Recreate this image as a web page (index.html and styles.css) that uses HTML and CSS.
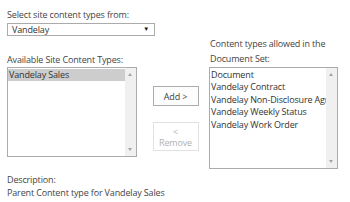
FILE: index.html
```html
<!DOCTYPE html>
<html lang="en">
<head>
    <meta charset="UTF-8">
    <title>Document Set content types</title>
    <link rel="stylesheet" href="styles.css">
</head>
<body>
    <div class="panel">
        <div class="source">
            <div class="label">Select site content types from:</div>
            <div class="dropdown">
                <span>Vandelay</span>
                <span class="caret">&#9660;</span>
            </div>
        </div>

        <div class="picker">
            <div class="label col-left">Available Site Content Types:</div>
            <div class="label col-right">Content types allowed in the Document Set:</div>

            <div class="col-left">
                <div class="listbox short">
                    <div class="items">
                        <div class="item selected">Vandelay Sales</div>
                    </div>
                    <div class="scroll"><span class="up"></span><span class="down"></span></div>
                </div>
                <div class="description">
                    <div>Description:</div>
                    <div>Parent Content type for Vandelay Sales</div>
                </div>
            </div>

            <div class="buttons">
                <button class="btn">Add &gt;</button>
                <button class="btn tall" disabled><span>&lt;</span><span>Remove</span></button>
            </div>

            <div class="col-right">
                <div class="listbox tall-list">
                    <div class="items">
                        <div class="item">Document</div>
                        <div class="item">Vandelay Contract</div>
                        <div class="item">Vandelay Non-Disclosure Agreement</div>
                        <div class="item">Vandelay Weekly Status</div>
                        <div class="item">Vandelay Work Order</div>
                    </div>
                    <div class="scroll"><span class="up"></span><span class="down"></span></div>
                </div>
            </div>
        </div>
    </div>
</body>
</html>
```

FILE: styles.css
```css
body {
    margin: 0;
    background: #fff;
    font-family: "Open Sans", Arial, sans-serif;
    font-size: 9px;
    letter-spacing: -0.15px;
    color: #444;
}

.panel {
    padding: 9px 0 0 7px;
}

.label {
    line-height: 12px;
}

.dropdown {
    width: 142px;
    height: 11px;
    margin-top: 2px;
    border: 1px solid #ababab;
    display: flex;
    justify-content: space-between;
    align-items: center;
    padding: 0 0 0 4px;
    box-sizing: content-box;
    line-height: 11px;
    color: #333;
}

.caret {
    font-size: 6px;
    color: #111;
    margin-right: 5px;
}

.picker {
    display: grid;
    grid-template-columns: 130px 72px 129px;
    grid-template-rows: auto auto;
    margin-top: 0;
}

.picker .label {
    align-self: end;
    margin-bottom: 1px;
}

.col-left {
    grid-column: 1;
}

.col-right {
    grid-column: 3;
}

.picker .label.col-right {
    line-height: 15px;
    padding-left: 1px;
}

.listbox {
    border: 1px solid #ababab;
    display: flex;
    box-sizing: border-box;
}

.listbox.short {
    height: 90px;
}

.listbox.tall-list {
    height: 102px;
}

.items {
    flex: 1;
    overflow: hidden;
    white-space: nowrap;
    padding-top: 1px;
}

.item {
    line-height: 12.4px;
    height: 12.4px;
    padding-left: 1px;
    color: #333;
}

.item.selected {
    background: #cdcdcd;
}

.scroll {
    width: 11px;
    background: #f0f0f0;
    position: relative;
}

.up, .down {
    position: absolute;
    left: 3px;
    width: 0;
    height: 0;
    border-left: 2.5px solid transparent;
    border-right: 2.5px solid transparent;
}

.up {
    top: 5px;
    border-bottom: 3px solid #a3a3a3;
}

.down {
    bottom: 5px;
    border-top: 3px solid #a3a3a3;
}

.description {
    margin-top: 16px;
    line-height: 13px;
    white-space: nowrap;
}

.buttons {
    grid-column: 2;
    grid-row: 2;
    display: flex;
    flex-direction: column;
    align-items: center;
    padding: 19px 0 0 5px;
    gap: 16px;
}

.btn {
    width: 46px;
    height: 20px;
    border: 1px solid #ababab;
    background: #fdfdfd;
    font-family: inherit;
    font-size: 9px;
    letter-spacing: inherit;
    color: #444;
    padding: 0;
    line-height: 11px;
    display: flex;
    flex-direction: column;
    align-items: center;
    justify-content: center;
}

.btn.tall {
    height: 29px;
}

.btn:disabled {
    border-color: #e1e1e1;
    color: #b1b1b1;
    background: #fff;
}
```
